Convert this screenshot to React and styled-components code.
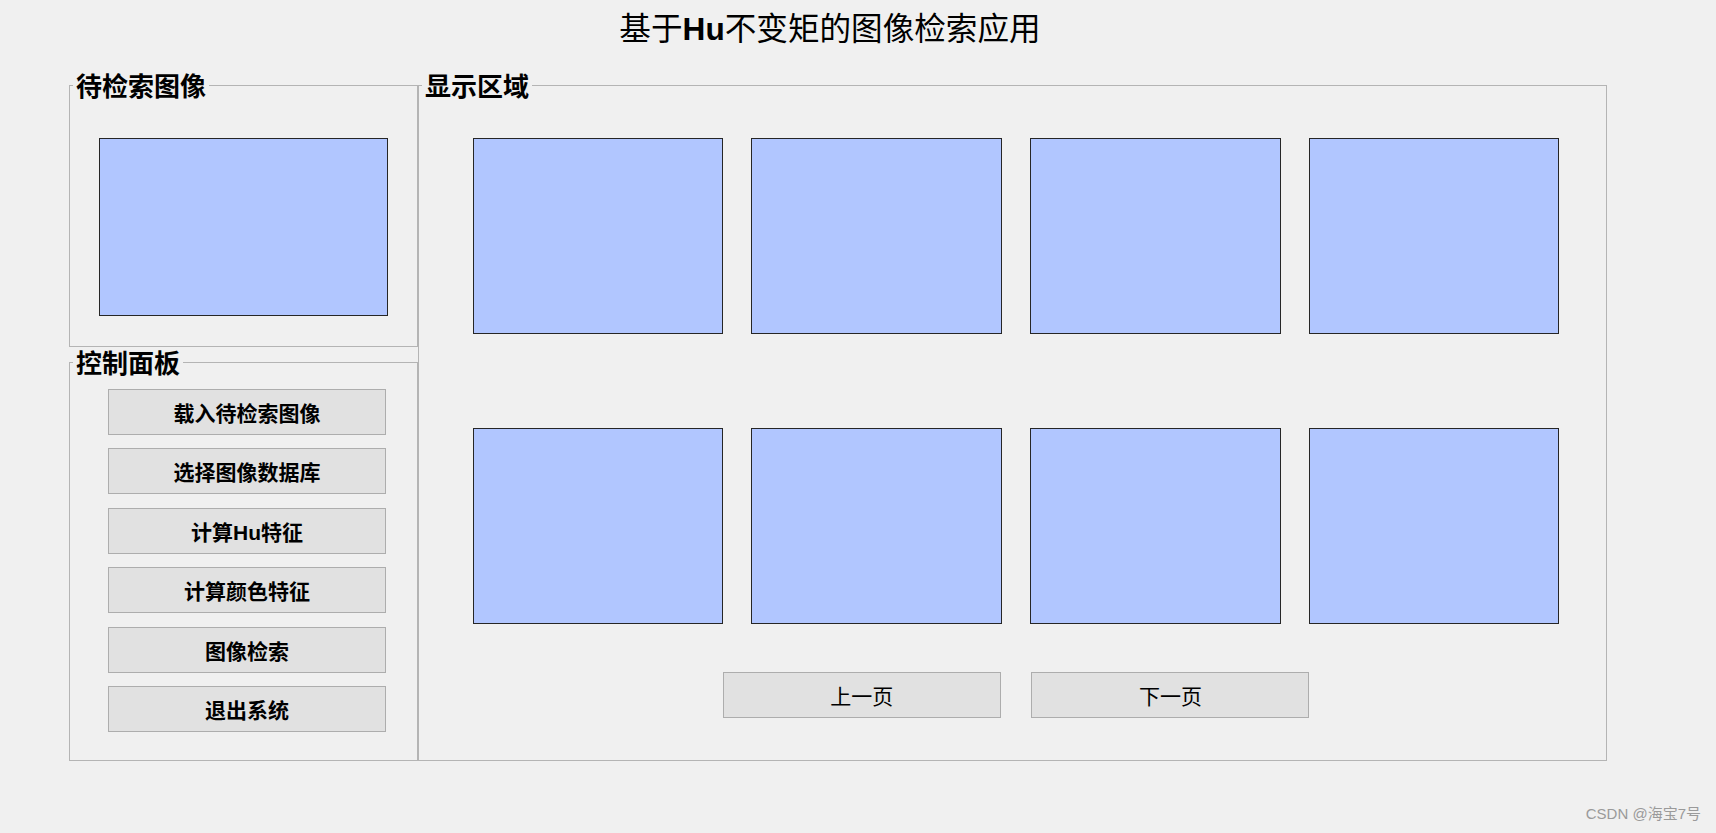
import React from "react"
import styled, { createGlobalStyle } from "styled-components"

const GlobalStyle = createGlobalStyle`
  html, body {
    margin: 0;
    padding: 0;
    background: #f0f0f0;
  }
  body {
    font-family: "Noto Sans CJK SC", "Liberation Sans", sans-serif;
    color: #000;
  }
`

const Page = styled.div`
  width: 1716px;
  height: 833px;
  overflow: hidden;
  background: #f0f0f0;
`

const Title = styled.h1`
  margin: 0;
  width: 1660px;
  height: 53px;
  line-height: 53px;
  text-align: center;
  font-size: 31.6px;
  font-weight: 400;
`

const Latin = styled.span`
  font-family: "Liberation Sans", Arial, sans-serif;
  font-weight: 700;
`

const Main = styled.div`
  display: flex;
  align-items: stretch;
  margin-top: 19px;
  padding-left: 69px;
`

const LeftColumn = styled.div`
  display: flex;
  flex-direction: column;
  gap: 2px;
  width: 349px;
`

const Frame = styled.fieldset`
  margin: 0;
  padding: 0;
  min-width: 0;
  box-sizing: border-box;
  border: 1px solid #b4b4b4;
  width: ${props => props.$width};
`

const Legend = styled.legend`
  margin-left: 3px;
  padding: 0 3px;
  font-size: 26px;
  line-height: 26px;
  font-weight: 700;
`

const PreviewBody = styled.div`
  padding: 40px 0 30px;
  display: flex;
  justify-content: center;
`

const ImageBox = styled.div`
  box-sizing: border-box;
  width: ${props => props.$w}px;
  height: ${props => props.$h}px;
  background: #b1c6ff;
  border: 1px solid #262626;
`

const ControlBody = styled.div`
  display: flex;
  flex-direction: column;
  gap: 13.4px;
  padding: 14px 0 28px 38px;
`

const Button = styled.button`
  box-sizing: border-box;
  width: 278px;
  height: 46px;
  margin: 0;
  padding: 0;
  background: #e1e1e1;
  border: 1px solid #adadad;
  font-family: "Noto Sans CJK SC", "Liberation Sans", sans-serif;
  font-size: 21px;
  font-weight: ${props => (props.$plain ? 400 : 700)};
  color: #000;
  cursor: pointer;
`

const DisplayBody = styled.div`
  padding: 40px 0 0 53.8px;
  width: 1086.6px;
`

const Grid = styled.div`
  display: grid;
  grid-template-columns: repeat(4, 250.5px);
  grid-auto-rows: 196px;
  column-gap: 28.2px;
  row-gap: 93.5px;
`

const Pager = styled.div`
  display: flex;
  justify-content: center;
  gap: 30.6px;
  margin-top: 48.3px;
`

const Footer = styled.div`
  padding: 44px 15px 0 0;
  text-align: right;
  font-family: "Liberation Sans", "Noto Sans CJK SC", sans-serif;
  font-size: 15px;
  line-height: 18px;
  color: #9a9a9a;
`

const controls = [
  "载入待检索图像",
  "选择图像数据库",
  <>计算<Latin>Hu</Latin>特征</>,
  "计算颜色特征",
  "图像检索",
  "退出系统",
]

const App = () => {
  return (
    <Page>
      <GlobalStyle />
      <Title>
        基于<Latin>Hu</Latin>不变矩的图像检索应用
      </Title>

      <Main>
        <LeftColumn>
          <Frame>
            <Legend>待检索图像</Legend>
            <PreviewBody>
              <ImageBox $w={289} $h={178} />
            </PreviewBody>
          </Frame>

          <Frame>
            <Legend>控制面板</Legend>
            <ControlBody>
              {controls.map((label, i) => (
                <Button key={i}>{label}</Button>
              ))}
            </ControlBody>
          </Frame>
        </LeftColumn>

        <Frame $width="1189px">
          <Legend>显示区域</Legend>
          <DisplayBody>
            <Grid>
              {Array.from({ length: 8 }).map((_, i) => (
                <ImageBox key={i} $w={250.5} $h={196} />
              ))}
            </Grid>
            <Pager>
              <Button $plain>上一页</Button>
              <Button $plain>下一页</Button>
            </Pager>
          </DisplayBody>
        </Frame>
      </Main>

      <Footer>CSDN @海宝7号</Footer>
    </Page>
  )
}

export default App
